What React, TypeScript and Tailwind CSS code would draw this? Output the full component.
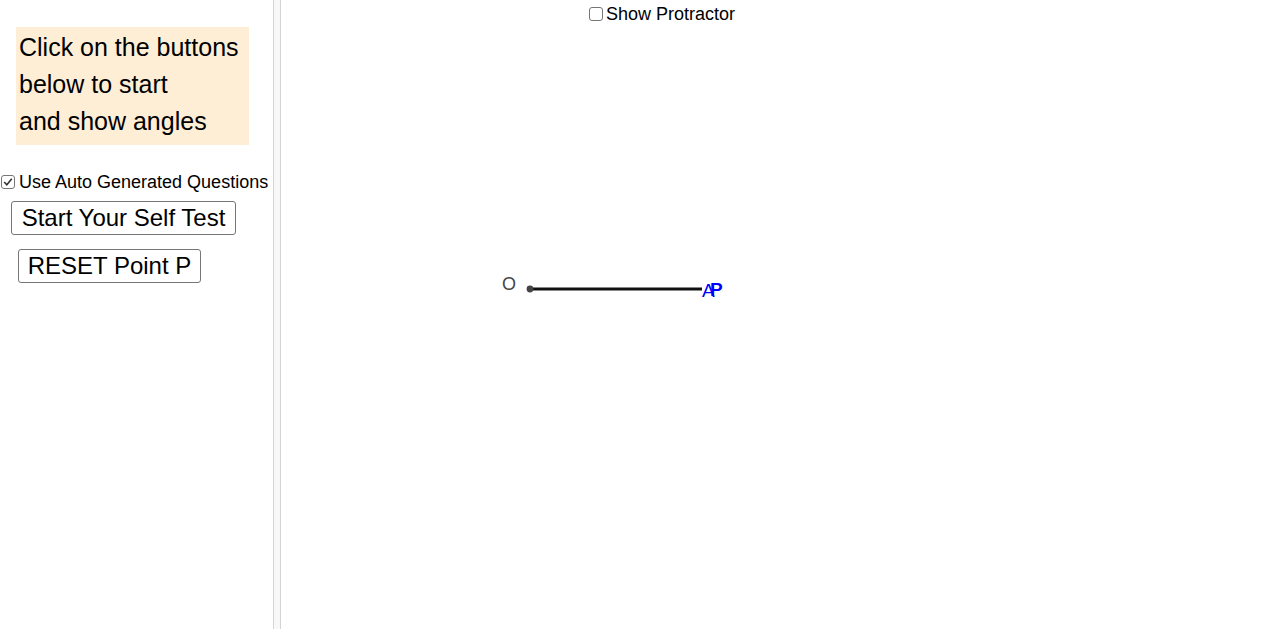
const font = { fontFamily: '"Liberation Sans", Arial, sans-serif' };

function Checkbox({ checked }: { checked?: boolean }) {
  return (
    <span className="inline-flex items-center justify-center w-[14px] h-[14px] border border-[#767676] rounded-[3px] bg-white shrink-0">
      {checked && (
        <svg width="12" height="12" viewBox="0 0 12 12">
          <path d="M2.2 6 L4.8 8.7 L9.8 2.8" fill="none" stroke="#333" strokeWidth="1.6" />
        </svg>
      )}
    </span>
  );
}

function SidePanel() {
  return (
    <div className="w-[273px] shrink-0 flex flex-col text-black">
      <div className="mt-[27px] ml-4 w-[233px] h-[118px] bg-[#ffeed6] pl-[3px] pt-[2px] text-[25px] leading-[37px]">
        <div>Click on the buttons</div>
        <div>below to start</div>
        <div>and show angles</div>
      </div>
      <label className="mt-[26px] ml-[1px] flex items-center gap-[4px] text-[18px] leading-[22px]">
        <Checkbox checked />
        <span>Use Auto Generated Questions</span>
      </label>
      <button className="mt-[8px] ml-[11px] w-[225px] h-[34px] border border-[#767676] rounded-[3px] bg-white text-[24px] leading-none">
        Start Your Self Test
      </button>
      <button className="mt-[14px] ml-[18px] w-[183px] h-[34px] border border-[#767676] rounded-[3px] bg-white text-[24px] leading-none">
        RESET Point P
      </button>
    </div>
  );
}

function Divider() {
  return <div className="w-[8px] shrink-0 border-l border-r border-[#d4d4d4] bg-[#f8f8f8]" />;
}

function Canvas() {
  return (
    <div className="relative flex-1">
      <svg className="w-full h-full" viewBox="0 0 999 629">
        <line x1="249" y1="289" x2="421" y2="289" stroke="#111" strokeWidth="2.8" />
        <circle cx="249" cy="289" r="3.4" fill="#444" />
        <text x="221" y="290" fontSize="18" fill="#444" style={font}>O</text>
        <text x="421" y="297" fontSize="19" fill="#0000ff" style={font}>A</text>
        <text x="429" y="296" fontSize="19" fill="#0000ff" fontWeight="bold" style={font}>P</text>
      </svg>
      <label className="absolute left-[308px] top-[3px] flex items-center gap-[3px] text-[18px] leading-[22px] text-black">
        <Checkbox />
        <span>Show Protractor</span>
      </label>
    </div>
  );
}

export default function App() {
  return (
    <div className="w-[1280px] h-[629px] flex bg-white" style={font}>
      <SidePanel />
      <Divider />
      <Canvas />
    </div>
  );
}
